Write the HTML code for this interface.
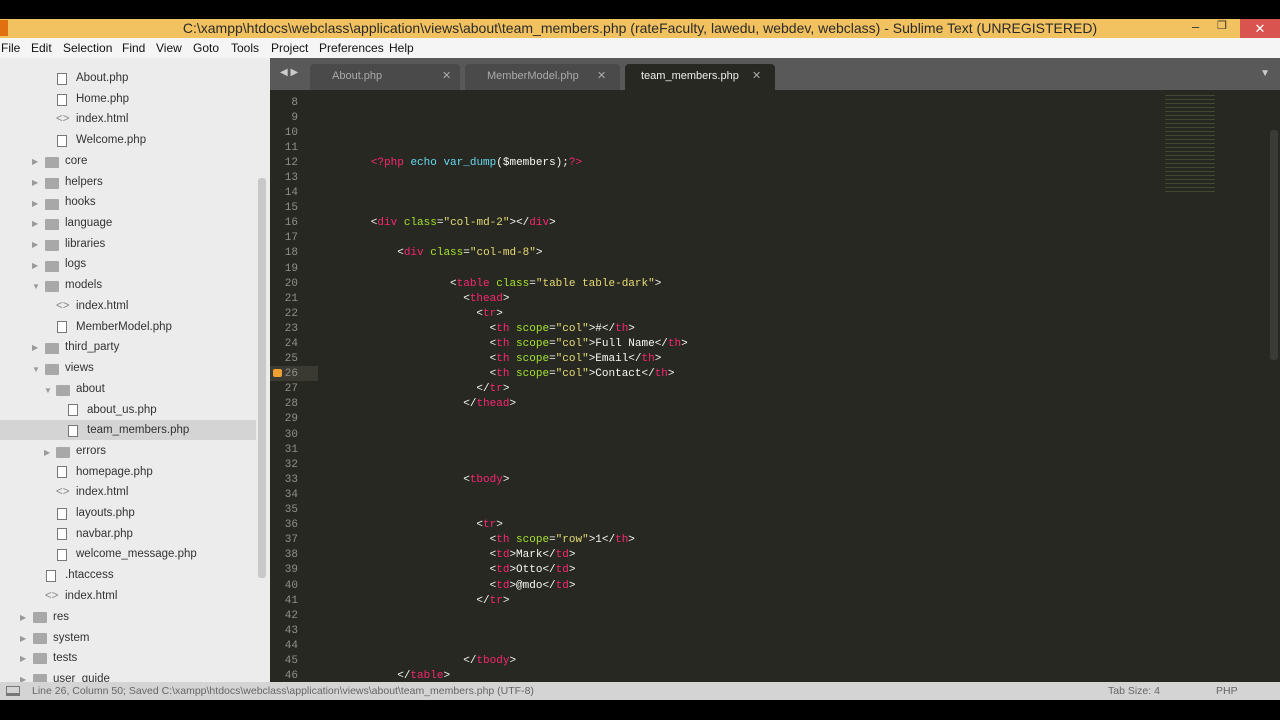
<!DOCTYPE html>
<html><head><style>
*{margin:0;padding:0;box-sizing:border-box}
body{width:1280px;height:720px;background:#000;position:relative;overflow:hidden;font-family:"Liberation Sans",sans-serif}
.title{position:absolute;top:19px;left:0;width:1280px;height:19px;background:#f1c25f;color:#2b2b2b;font-size:14px;line-height:19px;text-align:center}
.menu{position:absolute;top:38px;left:0;width:1280px;height:20px;background:#f5f5f5;font-size:12px;line-height:20px;color:#111}
.menu span{position:absolute}
.side{position:absolute;top:58px;left:0;width:270px;height:624px;background:#ececec;overflow:hidden}
.side .it{position:absolute;font-size:11.5px;color:#333;white-space:nowrap;margin-top:2px}
.fold{position:absolute;width:14px;height:11px;background:#a8a8a8;border-radius:1px;margin-top:2px}
.file{position:absolute;width:10px;height:12px;border:1px solid #777;background:#fff;margin-top:2px}
.tri{position:absolute;font-size:8px;color:#999;margin-top:2px}
.tabs{position:absolute;top:58px;left:270px;width:1010px;height:32px;background:#595959}
.tab{position:absolute;top:6px;height:26px;font-size:11px;color:#aaa;line-height:24px}
.editor{position:absolute;top:90px;left:270px;width:1010px;height:592px;background:#272822;overflow:hidden}
pre{position:absolute;font-family:"Liberation Mono",monospace;font-size:11px;line-height:15.1px;color:#f8f8f2}
.ln{left:0;width:28px;text-align:right;color:#8f908a;top:5.5px}
.code{left:48px;top:5.5px}
.t{color:#f92672}.a{color:#a6e22e}.s{color:#e6db74}.k{color:#66d9ef}
.status{position:absolute;top:682px;left:0;width:1280px;height:18px;background:#d4d4d4;font-size:10.5px;color:#666;line-height:18px}
</style></head><body>
<div class="title">C:\xampp\htdocs\webclass\application\views\about\team_members.php (rateFaculty, lawedu, webdev, webclass) - Sublime Text (UNREGISTERED)</div>
<div style="position:absolute;top:20px;left:0;width:8px;height:16px;background:#e07010"></div>
<div style="position:absolute;top:19px;left:1240px;width:40px;height:19px;background:#d9534f;color:#fff;text-align:center;font-size:13px;line-height:19px">✕</div>
<div style="position:absolute;top:19px;left:1192px;color:#333;font-size:13px">–</div>
<div style="position:absolute;top:19px;left:1217px;color:#333;font-size:11px">❐</div>
<div class="menu"><span style="left:1px">File</span><span style="left:31px">Edit</span><span style="left:63px">Selection</span><span style="left:122px">Find</span><span style="left:156px">View</span><span style="left:193px">Goto</span><span style="left:231px">Tools</span><span style="left:271px">Project</span><span style="left:319px">Preferences</span><span style="left:389px">Help</span></div>
<div class="side">
<div style="position:absolute;left:258px;top:120px;width:8px;height:400px;background:#c8c8c8;border-radius:3px"></div>
<div style="position:absolute;left:0;top:362px;width:256px;height:20px;background:#d4d4d4"></div>
<div class="file" style="left:57px;top:13px"></div><div class="it" style="left:76px;top:12px">About.php</div>
<div class="file" style="left:57px;top:34px"></div><div class="it" style="left:76px;top:33px">Home.php</div>
<div class="it" style="left:56px;top:53px;color:#888">&lt;&gt;</div><div class="it" style="left:76px;top:53px">index.html</div>
<div class="file" style="left:57px;top:75px"></div><div class="it" style="left:76px;top:74px">Welcome.php</div>
<div class="tri" style="left:32px;top:97px">▶</div><div class="fold" style="left:45px;top:97px"></div><div class="it" style="left:65px;top:95px">core</div>
<div class="tri" style="left:32px;top:118px">▶</div><div class="fold" style="left:45px;top:118px"></div><div class="it" style="left:65px;top:116px">helpers</div>
<div class="tri" style="left:32px;top:139px">▶</div><div class="fold" style="left:45px;top:139px"></div><div class="it" style="left:65px;top:136px">hooks</div>
<div class="tri" style="left:32px;top:159px">▶</div><div class="fold" style="left:45px;top:159px"></div><div class="it" style="left:65px;top:157px">language</div>
<div class="tri" style="left:32px;top:180px">▶</div><div class="fold" style="left:45px;top:180px"></div><div class="it" style="left:65px;top:178px">libraries</div>
<div class="tri" style="left:32px;top:201px">▶</div><div class="fold" style="left:45px;top:201px"></div><div class="it" style="left:65px;top:198px">logs</div>
<div class="tri" style="left:32px;top:222px">▼</div><div class="fold" style="left:45px;top:221px"></div><div class="it" style="left:65px;top:219px">models</div>
<div class="it" style="left:56px;top:240px;color:#888">&lt;&gt;</div><div class="it" style="left:76px;top:240px">index.html</div>
<div class="file" style="left:57px;top:261px"></div><div class="it" style="left:76px;top:261px">MemberModel.php</div>
<div class="tri" style="left:32px;top:283px">▶</div><div class="fold" style="left:45px;top:283px"></div><div class="it" style="left:65px;top:281px">third_party</div>
<div class="tri" style="left:32px;top:305px">▼</div><div class="fold" style="left:45px;top:304px"></div><div class="it" style="left:65px;top:302px">views</div>
<div class="tri" style="left:44px;top:326px">▼</div><div class="fold" style="left:56px;top:325px"></div><div class="it" style="left:76px;top:323px">about</div>
<div class="file" style="left:68px;top:344px"></div><div class="it" style="left:87px;top:344px">about_us.php</div>
<div class="file" style="left:68px;top:365px"></div><div class="it" style="left:87px;top:364px">team_members.php</div>
<div class="tri" style="left:44px;top:388px">▶</div><div class="fold" style="left:56px;top:387px"></div><div class="it" style="left:76px;top:385px">errors</div>
<div class="file" style="left:57px;top:406px"></div><div class="it" style="left:76px;top:406px">homepage.php</div>
<div class="it" style="left:56px;top:426px;color:#888">&lt;&gt;</div><div class="it" style="left:76px;top:426px">index.html</div>
<div class="file" style="left:57px;top:448px"></div><div class="it" style="left:76px;top:447px">layouts.php</div>
<div class="file" style="left:57px;top:468px"></div><div class="it" style="left:76px;top:468px">navbar.php</div>
<div class="file" style="left:57px;top:489px"></div><div class="it" style="left:76px;top:488px">welcome_message.php</div>
<div class="file" style="left:46px;top:510px"></div><div class="it" style="left:65px;top:509px">.htaccess</div>
<div class="it" style="left:45px;top:530px;color:#888">&lt;&gt;</div><div class="it" style="left:65px;top:530px">index.html</div>
<div class="tri" style="left:20px;top:553px">▶</div><div class="fold" style="left:33px;top:552px"></div><div class="it" style="left:53px;top:551px">res</div>
<div class="tri" style="left:20px;top:574px">▶</div><div class="fold" style="left:33px;top:573px"></div><div class="it" style="left:53px;top:572px">system</div>
<div class="tri" style="left:20px;top:594px">▶</div><div class="fold" style="left:33px;top:593px"></div><div class="it" style="left:53px;top:592px">tests</div>
<div class="tri" style="left:20px;top:615px">▶</div><div class="fold" style="left:33px;top:614px"></div><div class="it" style="left:53px;top:613px">user_guide</div>
</div>
<div class="tabs">
<div style="position:absolute;left:10px;top:9px;color:#ccc;font-size:10px">◀ ▶</div>
<div class="tab" style="left:40px;width:150px;background:#4a4a4a;border-radius:4px 4px 0 0;padding-left:22px">About.php<span style="position:absolute;left:132px">✕</span></div>
<div class="tab" style="left:195px;width:155px;background:#4a4a4a;border-radius:4px 4px 0 0;padding-left:22px">MemberModel.php<span style="position:absolute;left:132px">✕</span></div>
<div class="tab" style="left:355px;width:150px;background:#272822;color:#eee;border-radius:4px 4px 0 0;padding-left:16px">team_members.php<span style="position:absolute;left:127px;color:#aaa">✕</span></div>
<div style="position:absolute;right:10px;top:10px;color:#ccc;font-size:10px">▼</div>
</div>
<div class="editor">
<div style="position:absolute;left:0;top:276px;width:48px;height:15px;background:#3a3a32"></div>
<div style="position:absolute;left:3px;top:279px;width:9px;height:8px;background:#f0a030;border-radius:2px"></div>
<pre class="ln">
8
9
10
11
12
13
14
15
16
17
18
19
20
21
22
23
24
25
26
27
28
29
30
31
32
33
34
35
36
37
38
39
40
41
42
43
44
45
46</pre>
<pre class="code">




        <span class="t">&lt;?php</span> <span class="k">echo</span> <span class="k">var_dump</span>($members);<span class="t">?&gt;</span>



        &lt;<span class="t">div</span> <span class="a">class</span>=<span class="s">"col-md-2"</span>&gt;&lt;/<span class="t">div</span>&gt;

            &lt;<span class="t">div</span> <span class="a">class</span>=<span class="s">"col-md-8"</span>&gt;

                    &lt;<span class="t">table</span> <span class="a">class</span>=<span class="s">"table table-dark"</span>&gt;
                      &lt;<span class="t">thead</span>&gt;
                        &lt;<span class="t">tr</span>&gt;
                          &lt;<span class="t">th</span> <span class="a">scope</span>=<span class="s">"col"</span>&gt;#&lt;/<span class="t">th</span>&gt;
                          &lt;<span class="t">th</span> <span class="a">scope</span>=<span class="s">"col"</span>&gt;Full Name&lt;/<span class="t">th</span>&gt;
                          &lt;<span class="t">th</span> <span class="a">scope</span>=<span class="s">"col"</span>&gt;Email&lt;/<span class="t">th</span>&gt;
                          &lt;<span class="t">th</span> <span class="a">scope</span>=<span class="s">"col"</span>&gt;Contact&lt;/<span class="t">th</span>&gt;
                        &lt;/<span class="t">tr</span>&gt;
                      &lt;/<span class="t">thead</span>&gt;




                      &lt;<span class="t">tbody</span>&gt;


                        &lt;<span class="t">tr</span>&gt;
                          &lt;<span class="t">th</span> <span class="a">scope</span>=<span class="s">"row"</span>&gt;1&lt;/<span class="t">th</span>&gt;
                          &lt;<span class="t">td</span>&gt;Mark&lt;/<span class="t">td</span>&gt;
                          &lt;<span class="t">td</span>&gt;Otto&lt;/<span class="t">td</span>&gt;
                          &lt;<span class="t">td</span>&gt;@mdo&lt;/<span class="t">td</span>&gt;
                        &lt;/<span class="t">tr</span>&gt;



                      &lt;/<span class="t">tbody</span>&gt;
            &lt;/<span class="t">table</span>&gt;</pre>
<div style="position:absolute;left:1000px;top:40px;width:8px;height:230px;background:#3a3a36;border-radius:3px"></div>
<div style="position:absolute;left:895px;top:2px;width:50px;height:100px;opacity:.5;background:repeating-linear-gradient(#272822 0 3px,#5a6a40 3px 4px)"></div>
</div>
<div class="status"><div style="position:absolute;left:6px;top:4px;width:14px;height:10px;border:1px solid #777;border-bottom-width:3px"></div><span style="position:absolute;left:32px">Line 26, Column 50; Saved C:\xampp\htdocs\webclass\application\views\about\team_members.php (UTF-8)</span><span style="position:absolute;left:1108px">Tab Size: 4</span><span style="position:absolute;left:1216px">PHP</span></div>
</body></html>
